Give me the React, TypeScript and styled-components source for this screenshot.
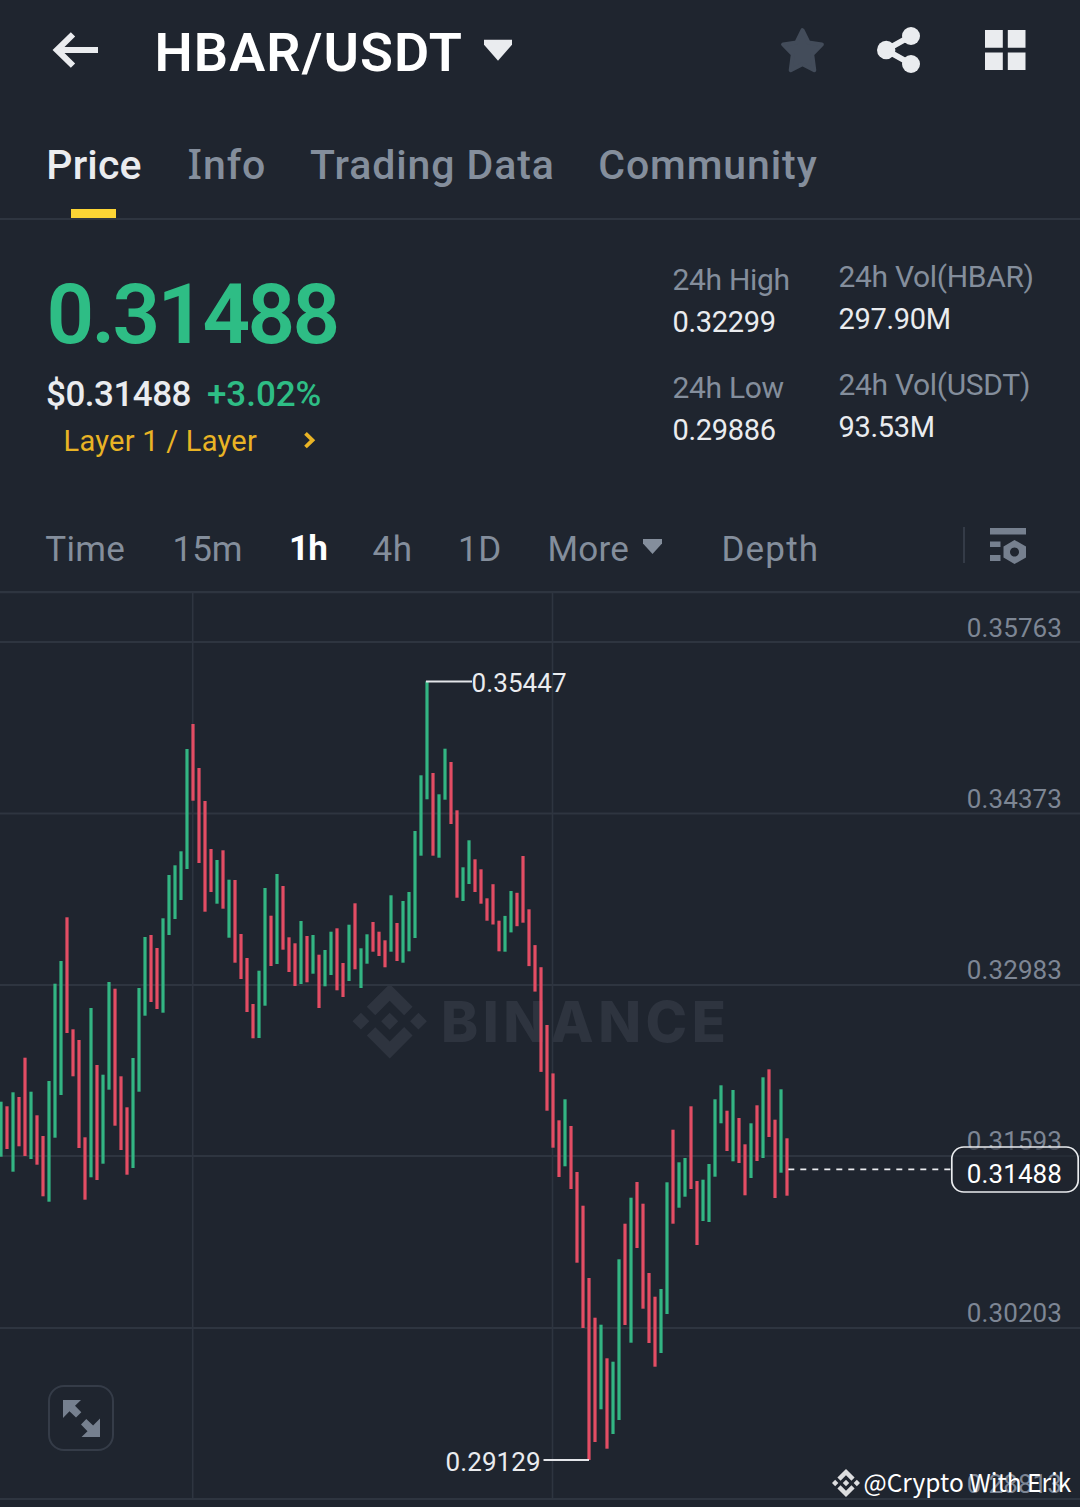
import React from "react";
import styled, { createGlobalStyle } from "styled-components";

const color = {
  bg: "#1f252f",
  line: "#2e3540",
  text: "#eaecef",
  muted: "#848e9c",
  up: "#2ebd85",
  brand: "#fcd535",
  link: "#e9b425",
  watermark: "#2e343f",
};

const GlobalStyle = createGlobalStyle`
  * { box-sizing: border-box; }
  body {
    margin: 0;
    background: ${color.bg};
    color: ${color.text};
    font-family: Roboto, "Liberation Sans", sans-serif;
  }
`;

const Page = styled.main`
  position: relative;
  width: 1080px;
  height: 1507px;
  overflow: hidden;
  display: flex;
  flex-direction: column;
  background: ${color.bg};
`;

const TopBar = styled.header`
  display: flex;
  align-items: center;
  height: 100px;
  padding: 0 54.5px 0 52px;
`;

const Pair = styled.h1`
  margin: 5px 0 0 56.5px;
  font-size: 54px;
  font-weight: 600;
  line-height: 63px;
  letter-spacing: 1.1px;
  color: #fff;
`;

const Actions = styled.div`
  display: flex;
  align-items: center;
  margin-left: auto;
`;

const Icon = styled.svg<{ $ml?: number }>`
  display: block;
  flex: none;
  margin-left: ${(p) => p.$ml ?? 0}px;
`;

const Tabs = styled.nav`
  display: grid;
  grid-template-columns: 141.2px 122.6px 288.2px auto;
  justify-content: start;
  height: 120px;
  padding-left: 46.3px;
  border-bottom: 2px solid ${color.line};
`;

const Tab = styled.div<{ $active?: boolean }>`
  display: flex;
  flex-direction: column;
  justify-self: start;
  align-items: center;
  height: 118px;
  padding-top: 41px;
  font-size: 41px;
  font-weight: 500;
  line-height: 48px;
  letter-spacing: ${(p) => (p.$active ? 0.2 : 0.9)}px;
  white-space: nowrap;
  color: ${(p) => (p.$active ? color.text : color.muted)};
`;

const SerifCap = styled.span`
  font-family: "Noto Sans", sans-serif;
  font-size: 41px;
  line-height: 40px;
`;

const Underline = styled.span`
  width: 45px;
  height: 9px;
  margin: auto 1px 0 0;
  background: ${color.brand};
`;

const Summary = styled.section`
  display: flex;
  height: 290px;
  padding-left: 46px;
`;

const PriceBlock = styled.div`
  width: 626.5px;
  padding-top: 52px;
`;

const LastPrice = styled.div`
  height: 102px;
  padding-left: 0.5px;
  font-size: 83.5px;
  font-weight: 600;
  line-height: 85px;
  letter-spacing: -2.7px;
  color: ${color.up};
`;

const FiatRow = styled.div`
  display: flex;
  gap: 16px;
  font-size: 35px;
  font-weight: 500;
  line-height: 41px;
  letter-spacing: -0.5px;
`;

const Change = styled.span`
  letter-spacing: -0.05px;
  color: ${color.up};
`;

const TagLink = styled.div`
  display: flex;
  align-items: center;
  margin-top: 8px;
  padding-left: 17.5px;
  font-size: 29px;
  line-height: 36px;
  letter-spacing: 0.26px;
  color: ${color.link};
`;

const StatColumn = styled.dl<{ $width: number; $top: number }>`
  width: ${(p) => p.$width}px;
  margin: 0;
  padding-top: ${(p) => p.$top}px;
  display: flex;
  flex-direction: column;
  gap: 24px;
`;

const StatLabel = styled.dt`
  font-size: 30px;
  line-height: 42px;
  letter-spacing: -0.32px;
  white-space: nowrap;
  color: ${color.muted};
`;

const StatValue = styled.dd`
  margin: 0;
  font-size: 29px;
  line-height: 42px;
  letter-spacing: -0.3px;
`;

const IntervalBar = styled.nav`
  display: flex;
  align-items: center;
  height: 81px;
  padding: 0 54px 9px 45.3px;
`;

const Intervals = styled.div`
  display: grid;
  grid-template-columns: 127.2px 116.4px 83.5px 85.5px 89.5px 174px auto;
  padding-top: 8px;
`;

const Interval = styled.div<{ $active?: boolean; $spacing?: number }>`
  display: flex;
  align-items: center;
  font-size: 35px;
  font-weight: ${(p) => (p.$active ? 700 : 400)};
  line-height: 40px;
  letter-spacing: ${(p) => p.$spacing ?? 0.3}px;
  color: ${(p) => (p.$active ? "#fff" : color.muted)};
  margin-top: ${(p) => (p.$active ? -2 : 0)}px;
`;

const Separator = styled.span`
  width: 2px;
  height: 36px;
  margin: -2px 25px 0 auto;
  background: #343b47;
`;

const ChartArea = styled.section`
  position: relative;
  height: 916px;
`;

const ChartSvg = styled.svg`
  display: block;
  font-family: Roboto, "Liberation Sans", sans-serif;
  font-size: 26px;
  letter-spacing: 0.1px;
`;

const ExpandButton = styled.button`
  position: absolute;
  left: 48px;
  top: 794px;
  width: 66px;
  height: 66px;
  padding: 0;
  display: grid;
  place-items: center;
  border: 2.5px solid #353c48;
  border-radius: 16px;
  background: ${color.bg};
`;

const Credit = styled.div`
  position: absolute;
  left: 832px;
  bottom: 7px;
  display: flex;
  align-items: center;
  gap: 3.5px;
  font-family: "Noto Sans CJK SC", "Noto Sans", sans-serif;
  font-size: 24.5px;
  line-height: 36px;
  white-space: nowrap;
  color: #fff;
`;

const CreditName = styled.span`
  margin-top: -1px;
`;

const BINANCE_MARK =
  "M38.73 53.2l24.59-24.58 24.6 24.6 14.3-14.31L63.32 0 24.42 38.9zM0 63.31L14.3 49l14.31 14.31L14.3 77.61zM38.73 73.41L63.32 98l24.6-24.6 14.31 14.29-38.91 38.91-38.9-38.88zM98 63.31L112.3 49l14.31 14.3-14.31 14.32zM77.83 63.3L63.32 48.78 48.81 63.29 63.32 77.8z";

/* One bar per hour: direction, y of the high, y of the low. */
type Bar = ["u" | "d", number, number];
const bars: Bar[] = [
  ["u", 1101.7, 1156.7], ["d", 1106.3, 1149], ["u", 1092.3, 1171.7], ["d", 1097, 1146.3], ["d", 1057.7, 1156],
  ["u", 1091.7, 1159], ["d", 1115.3, 1164.7], ["d", 1136, 1196.3], ["u", 1081, 1201.7], ["u", 983.7, 1137.7],
  ["u", 961, 1095], ["d", 917.3, 1033], ["d", 1029.3, 1076.3], ["d", 1040, 1148], ["d", 1137.3, 1199.7],
  ["u", 1008, 1177.3], ["d", 1065, 1180], ["u", 1074.7, 1163.7], ["u", 982, 1089.7], ["d", 988.7, 1125.7],
  ["d", 1076.3, 1150], ["d", 1107.3, 1174.7], ["u", 1058, 1168], ["u", 988, 1091.7], ["u", 937, 1015.7],
  ["d", 935, 1002], ["d", 948, 1009], ["u", 918.3, 1012.7], ["u", 875, 935], ["u", 865.3, 919],
  ["u", 851.3, 900], ["u", 749, 869], ["d", 724, 800.7], ["d", 768, 863], ["d", 801, 911.7],
  ["d", 849, 892], ["u", 860, 903.7], ["d", 850.3, 908.7], ["u", 879.7, 937.7], ["d", 880, 962.7],
  ["d", 934, 979], ["d", 958, 1012], ["d", 1004, 1038.3], ["u", 970.7, 1038], ["u", 888, 1005.7],
  ["d", 915.7, 966], ["u", 874, 964], ["d", 886, 949.7], ["d", 937.3, 972], ["d", 943.3, 986],
  ["u", 921, 984], ["d", 936, 982.3], ["u", 935, 973.7], ["d", 954.7, 1008], ["u", 950, 986.3],
  ["u", 931.7, 975], ["d", 928.3, 990.3], ["d", 963, 997], ["u", 924.7, 981], ["d", 903.3, 969.3],
  ["u", 948.3, 988], ["u", 934.3, 963.7], ["d", 922, 951.7], ["d", 931.7, 956], ["d", 940.3, 967.3],
  ["u", 895.3, 951.7], ["d", 923, 961], ["u", 901, 962.7], ["u", 892, 951.3], ["u", 831, 938],
  ["u", 775.3, 855.7], ["u", 681.3, 799.3], ["d", 773, 855.7], ["u", 794.3, 857.7], ["u", 748.7, 799.7],
  ["d", 762, 824], ["d", 810.3, 897.7], ["u", 867.3, 901], ["u", 840.3, 884], ["d", 859.3, 892],
  ["d", 869.3, 903.7], ["d", 898.3, 920.7], ["d", 884.2, 924.5], ["d", 920.7, 951.3], ["u", 915.9, 951.7],
  ["u", 891, 932.4], ["d", 892.8, 926.2], ["d", 856, 922.7], ["d", 909.3, 966.1], ["d", 945.1, 991.6],
  ["d", 967.2, 1071.9], ["d", 1025, 1110.7], ["d", 1073.4, 1147.7], ["d", 1120.3, 1177], ["u", 1099.3, 1166.3],
  ["d", 1126, 1189], ["d", 1172, 1262.7], ["d", 1205.7, 1328], ["d", 1278, 1460], ["d", 1317.7, 1442],
  ["u", 1324.7, 1409.3], ["d", 1358.3, 1448.7], ["u", 1361.7, 1434], ["u", 1259.3, 1420], ["d", 1223.7, 1325],
  ["u", 1197.7, 1342.7], ["d", 1182, 1248], ["d", 1203.7, 1308.7], ["d", 1273, 1343], ["d", 1296.7, 1366.7],
  ["u", 1289, 1353], ["u", 1182.3, 1314], ["d", 1129.7, 1223.7], ["u", 1162.3, 1207.7], ["u", 1158, 1196.7],
  ["d", 1106.3, 1189], ["d", 1181, 1245], ["u", 1179.7, 1221], ["u", 1164, 1222], ["u", 1099.3, 1176.7],
  ["u", 1085.3, 1123.3], ["d", 1110.7, 1151], ["u", 1090, 1161.3], ["d", 1118, 1163], ["d", 1144.3, 1195.3],
  ["u", 1123.3, 1178], ["d", 1105.3, 1161], ["u", 1077.3, 1158], ["d", 1069.3, 1137], ["d", 1119.7, 1198],
  ["u", 1089.3, 1172.7], ["d", 1138.3, 1195.7],
];

const gridRows = [
  { y: 642, baseline: 636.8, label: "0.35763" },
  { y: 813.5, baseline: 808, label: "0.34373" },
  { y: 985, baseline: 979.2, label: "0.32983" },
  { y: 1156, baseline: 1150, label: "0.31593" },
  { y: 1328, baseline: 1322.2, label: "0.30203" },
  { y: 1499, baseline: 1492.8, label: "0.28813" },
];

function Chart() {
  return (
    <ChartSvg width="1080" height="916" viewBox="0 591 1080 916">
      <path d="M0 592H1080" stroke={color.line} strokeWidth="2.5" />
      <g fill={color.watermark}>
        <path d={BINANCE_MARK} transform="translate(352.5 984) scale(.5875)" />
        <text x="441" y="1041.7" fontFamily="Inter" fontSize="56" fontWeight="800" letterSpacing="4.5">
          BINANCE
        </text>
      </g>
      <g stroke={color.line} strokeWidth="2">
        {gridRows.map((r) => (
          <path key={r.y} d={`M0 ${r.y}H1080`} />
        ))}
        <path d="M192.7 592V1499M552.5 592V1499" strokeWidth="1.6" />
      </g>
      <g fill="#7d8694">
        {gridRows.map((r) => (
          <text key={r.y} x="966.8" y={r.baseline}>
            {r.label}
          </text>
        ))}
      </g>
      <g strokeWidth="3.2">
        {bars.map(([dir, high, low], i) => (
          <path key={i} d={`M${1 + i * 6} ${high}V${low}`} stroke={dir === "u" ? "#33b583" : "#e34d64"} />
        ))}
      </g>
      <path d="M426 681.5H472M543.5 1460H589" stroke="#e4e6ea" strokeWidth="1.8" />
      <g fill={color.text}>
        <text x="471.5" y="692">0.35447</text>
        <text x="445.5" y="1470.7">0.29129</text>
      </g>
      <path d="M788.3 1169.3H951" stroke={color.text} strokeWidth="1.7" strokeDasharray="6 6" />
      <rect x="951.8" y="1147" width="126.4" height="45" rx="12" fill={color.bg} fillOpacity=".6" stroke={color.text} strokeWidth="1.7" />
      <text x="966.8" y="1182.7" fill="#fff">0.31488</text>
    </ChartSvg>
  );
}

export default function App() {
  return (
    <>
      <GlobalStyle />
      <Page>
        <TopBar>
          <Icon width="46" height="36" viewBox="0 0 46 36" fill="none" stroke={color.text} strokeWidth="6.2">
            <path d="M21 2.4 5 18l16 15.6M5 18h41" />
          </Icon>
          <Pair>HBAR/USDT</Pair>
          <Icon $ml={20.6} width="28" height="22" viewBox="0 0 28 22" fill={color.text}>
            <path d="M0 .8h28v5L14 21.8 0 5.8z" />
          </Icon>
          <Actions>
            <Icon width="45" height="46" viewBox="0 0 45 46" fill="#434c5a" stroke="#434c5a" strokeWidth="4" strokeLinejoin="round">
              <path d="M22.5 3.2l6 12.2 13.4 2-9.7 9.9 2.1 15.9-11.8-5.9-11.8 5.9 2.1-15.9-9.7-9.9 13.4-2z" />
            </Icon>
            <Icon $ml={52} width="44" height="46" viewBox="0 0 44 46" fill={color.text} stroke={color.text}>
              <path d="M34 9 9 23l25 14" fill="none" strokeWidth="6" />
              <g stroke="none">
                <circle cx="34" cy="9" r="9" />
                <circle cx="9.2" cy="23" r="9.2" />
                <circle cx="34" cy="37" r="9" />
              </g>
            </Icon>
            <Icon $ml={63.5} width="41" height="40" viewBox="0 0 41 40" fill={color.text}>
              <path d="M0 0h17.8v17.7H0zM22.8 0h17.7v17.7H22.8zM0 22.5h17.8V40H0zM22.8 22.5h17.7V40H22.8z" />
            </Icon>
          </Actions>
        </TopBar>

        <Tabs>
          <Tab $active>
            Price
            <Underline />
          </Tab>
          <Tab>
            <span>
              <SerifCap>I</SerifCap>nfo
            </span>
          </Tab>
          <Tab>Trading Data</Tab>
          <Tab>Community</Tab>
        </Tabs>

        <Summary>
          <PriceBlock>
            <LastPrice>0.31488</LastPrice>
            <FiatRow>
              <span>$0.31488</span>
              <Change>+3.02%</Change>
            </FiatRow>
            <TagLink>
              Layer 1 / Layer
              <Icon $ml={46.5} width="12" height="18" viewBox="0 0 12 18" fill="none" stroke={color.link} strokeWidth="3.8">
                <path d="M1.5 1.4l7 6.8-7 6.8" />
              </Icon>
            </TagLink>
          </PriceBlock>
          <StatColumn $width={166} $top={39}>
            <div>
              <StatLabel>24h High</StatLabel>
              <StatValue>0.32299</StatValue>
            </div>
            <div>
              <StatLabel>24h Low</StatLabel>
              <StatValue>0.29886</StatValue>
            </div>
          </StatColumn>
          <StatColumn $width={200} $top={36}>
            <div>
              <StatLabel>24h Vol(HBAR)</StatLabel>
              <StatValue>297.90M</StatValue>
            </div>
            <div>
              <StatLabel>24h Vol(USDT)</StatLabel>
              <StatValue>93.53M</StatValue>
            </div>
          </StatColumn>
        </Summary>

        <IntervalBar>
          <Intervals>
            <Interval>Time</Interval>
            <Interval $spacing={0}>15m</Interval>
            <Interval $active $spacing={-0.8}>1h</Interval>
            <Interval $spacing={0.6}>4h</Interval>
            <Interval $spacing={0.6}>1D</Interval>
            <Interval>
              More
              <Icon $ml={13.5} width="19" height="23" viewBox="0 0 19 23" fill={color.muted}>
                <path d="M0 0h19v4.5L9.5 15 0 4.5z" />
              </Icon>
            </Interval>
            <Interval $spacing={1.2}>Depth</Interval>
          </Intervals>
          <Separator />
          <Icon width="36" height="36" viewBox="0 0 36 36" fill="#76808f">
            <path d="M0 0h36v6.5H0zM0 13.5h10.5V19H0zM0 27h10.5v6H0z" />
            <path fillRule="evenodd" d="M24.5 12 36 18.5v11L24.5 36l-11-6.5v-11zM24.5 19.5a4.500 4.500 0 1 0 .01 0z" />
          </Icon>
        </IntervalBar>

        <ChartArea>
          <Chart />
          <ExpandButton aria-label="Expand chart">
            <Icon width="37" height="37" viewBox="0 0 37 37" fill="#76808f">
              <path d="M0 0h18l-6 5.8 6.3 6.5-5.3 5.3-6.5-6.3L0 18zM37 37H18.5l6-5.8-6.5-6.8 5.3-5.3 6.8 6.5L37 18.5z" />
            </Icon>
          </ExpandButton>
          <Credit>
            <Icon width="28" height="28" viewBox="0 0 126.61 126.6" fill="#dcdddf">
              <path d={BINANCE_MARK} />
            </Icon>
            <CreditName>@Crypto With Erik</CreditName>
          </Credit>
        </ChartArea>
      </Page>
    </>
  );
}
